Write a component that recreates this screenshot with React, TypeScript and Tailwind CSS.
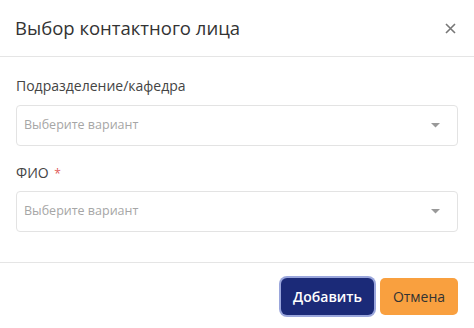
import React from 'react';

const ChevronDown = () => (
    <svg width="9" height="5" viewBox="0 0 9 5" className="text-[#999]">
        <path d="M0 0 L9 0 L4.5 4.5 Z" fill="currentColor" />
    </svg>
);

const SelectField: React.FC<{ placeholder: string }> = ({ placeholder }) => (
    <div className="flex h-[41px] items-center justify-between rounded-[4px] border border-[#e3e3e3] bg-white pl-[7px] pr-[17px]">
        <span className="text-[12.5px] text-[#a6a6a6]">{placeholder}</span>
        <ChevronDown />
    </div>
);

export default function App() {
    return (
        <div className="h-[328px] w-[474px] bg-white text-[#333]" style={{ fontFamily: '"Open Sans", "Noto Sans", sans-serif' }}>
            <div className="flex h-[57px] items-center justify-between border-b border-[#e5e5e5] pl-[15px] pr-[18px]">
                <h2 className="text-[18.5px] text-[#333]">Выбор контактного лица</h2>
                <button className="text-[#777]">
                    <svg width="11" height="11" viewBox="0 0 11 11">
                        <path d="M1 1 L10 10 M10 1 L1 10" stroke="currentColor" strokeWidth="1.6" />
                    </svg>
                </button>
            </div>

            <div className="flex h-[205px] flex-col px-[16px] pt-[18px]">
                <label className="mb-[9px] text-[14px] text-[#444]">Подразделение/кафедра</label>
                <SelectField placeholder="Выберите вариант" />

                <label className="mb-[8px] mt-[16px] text-[14px] text-[#444]">
                    ФИО <span className="ml-[2px] text-[12px] text-[#e05a5a]">*</span>
                </label>
                <SelectField placeholder="Выберите вариант" />
            </div>

            <div className="flex items-center justify-end gap-[6px] border-t border-[#e5e5e5] pr-[16px] pt-[15px]">
                <button className="h-[37px] w-[93px] rounded-[6px] bg-[#1b2a78] text-[14px] font-semibold text-white ring-2 ring-[#9aa6dc]">
                    Добавить
                </button>
                <button className="h-[37px] w-[78px] rounded-[5px] bg-[#f9a03f] text-[14px] text-[#333]">
                    Отмена
                </button>
            </div>
        </div>
    );
}
